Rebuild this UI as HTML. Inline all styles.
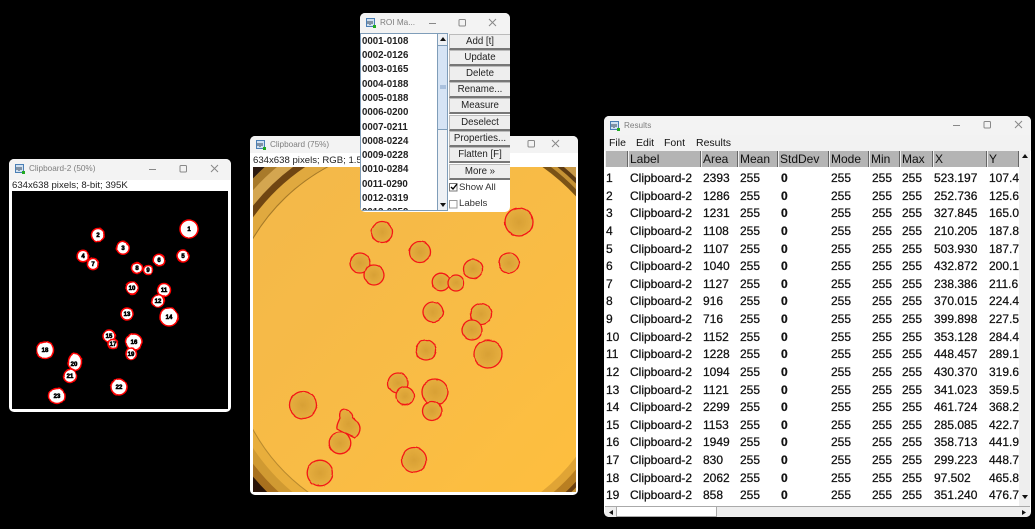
<!DOCTYPE html>
<html><head><meta charset="utf-8"><style>
html,body{margin:0;padding:0;background:#000;width:1035px;height:529px;overflow:hidden;font-family:"Liberation Sans",sans-serif}
#root{position:relative;width:1035px;height:529px;overflow:hidden;background:#000}
.w{position:absolute;background:#fff;border-radius:5px;overflow:hidden}
.tb{position:absolute;left:0;right:0;top:0;background:#f3f3f3}
.t{position:absolute;font-size:8.2px;color:#7d7d7d;white-space:nowrap;line-height:10px}
.a{position:absolute;white-space:nowrap}
.ic{position:absolute}
.b{position:absolute;width:60px;height:13px;background:#eee;border:1px solid #bbb;border-bottom:2px solid #777;border-right:1px solid #888;font-size:9.7px;line-height:14px;text-align:center;color:#222}
.l{position:absolute;left:1px;font-size:9.7px;font-weight:bold;color:#222;line-height:12px}
table{border-collapse:collapse;table-layout:fixed;position:absolute;left:1px;top:54px;width:414px;font-size:12px;color:#111;-webkit-text-stroke:.25px #111}
td{padding:0 0 0 1px;height:17.62px;line-height:17.62px;white-space:nowrap;overflow:hidden}
td:nth-child(5){font-weight:bold}
.h{position:absolute;top:35px;height:16px;background:#b4b4b4;border-left:1px solid #eee;border-right:1px solid #666;box-sizing:border-box;font-size:12px;line-height:17px;padding-left:1px;color:#111;overflow:hidden}
</style></head><body><div id="root">

<div class="w" style="left:9px;top:159px;width:222px;height:253px">
<div class="tb" style="height:21px"></div>
<svg class="ic" style="left:6px;top:5px" width="10" height="10"><rect x=".5" y=".5" width="8" height="8" fill="#cfe0f2" stroke="#4a7fb5"/><path d="M2 3v3M4 3v4M6 3v3" stroke="#345"/><rect x="7" y="7" width="3" height="3" fill="#2a2"/></svg>
<div class="t" style="left:20px;top:5px">Clipboard-2 (50%)</div>
<svg class="ic" style="left:140px;top:3px" width="75" height="14" fill="none" stroke="#888"><path d="M0 7.500h7"/><rect x="31" y="3.500" width="6.500" height="6.500" rx="1"/><path d="M62 3l7 7M69 3l-7 7"/></svg>
<div class="a" style="left:3px;top:21px;font-size:9.6px;line-height:11px;color:#222">634x638 pixels; 8-bit; 395K</div>
<svg class="ic" style="left:3px;top:32px" width="216" height="218" viewBox="12 191 216 218">
<rect x="12" y="191" width="216" height="218" fill="#000"/>
<g fill="#fff" stroke="#f00" stroke-width="1.500" filter="url(#r)">
<circle cx="189" cy="229" r="9"/><circle cx="98" cy="235" r="6.500"/><circle cx="123" cy="248" r="6.200"/><circle cx="83" cy="256" r="5.800"/><circle cx="183" cy="256" r="6"/><circle cx="159" cy="260" r="5.800"/><circle cx="93" cy="264" r="5.600"/><circle cx="137" cy="268" r="5.500"/><circle cx="148" cy="270" r="4.500"/><circle cx="132" cy="288" r="6"/><circle cx="164" cy="290" r="6.500"/><circle cx="158" cy="301" r="6"/><circle cx="127" cy="314" r="6"/><circle cx="169" cy="317" r="9"/><circle cx="109" cy="336" r="6"/><circle cx="113" cy="344" r="5"/><circle cx="134" cy="342" r="8"/><circle cx="131" cy="354" r="5.500"/><circle cx="45" cy="350" r="8.500"/><ellipse cx="75" cy="362" rx="6.500" ry="8.500"/><circle cx="70" cy="376" r="6.500"/><circle cx="119" cy="387" r="8"/><circle cx="57" cy="396" r="8"/>
</g>
<g font-size="6" font-weight="bold" text-anchor="middle" fill="#000" stroke="#000" stroke-width=".6">
<text x="189" y="231">1</text><text x="98" y="237">2</text><text x="123" y="250">3</text><text x="83" y="258">4</text><text x="183" y="258">5</text><text x="159" y="262">6</text><text x="93" y="266">7</text><text x="137" y="270">8</text><text x="148" y="272">9</text><text x="132" y="290">10</text><text x="164" y="292">11</text><text x="158" y="303">12</text><text x="127" y="316">13</text><text x="169" y="319">14</text><text x="109" y="338">15</text><text x="134" y="344">16</text><text x="113" y="346">17</text><text x="45" y="352">18</text><text x="131" y="356">19</text><text x="74" y="366">20</text><text x="70" y="378">21</text><text x="119" y="389">22</text><text x="57" y="398">23</text>
</g></svg>
</div>

<div class="w" style="left:250px;top:136px;width:328px;height:359px">
<div class="tb" style="height:17px"></div>
<svg class="ic" style="left:6px;top:4px" width="10" height="10"><rect x=".5" y=".5" width="8" height="8" fill="#cfe0f2" stroke="#4a7fb5"/><path d="M2 3v3M4 3v4M6 3v3" stroke="#345"/><rect x="7" y="7" width="3" height="3" fill="#2a2"/></svg>
<div class="t" style="left:20px;top:4px">Clipboard (75%)</div>
<svg class="ic" style="left:270px;top:1px" width="50" height="14" fill="none" stroke="#888"><rect x="8" y="3.500" width="6.500" height="6.500" rx="1"/><path d="M32 3l7 7M39 3l-7 7"/></svg>
<div class="a" style="left:3px;top:19px;font-size:9.6px;line-height:11px;color:#222">634x638 pixels; RGB; 1.5</div>
<svg class="ic" style="left:3px;top:31px" width="323" height="325" viewBox="253 167 323 325">
<defs>
<linearGradient id="g" x1="0" y1="0" x2="1" y2="1"><stop offset="0" stop-color="#f3b84a"/><stop offset=".6" stop-color="#f9bc45"/><stop offset="1" stop-color="#febf3e"/></linearGradient>
<radialGradient id="c"><stop offset="0" stop-color="#d8a035"/><stop offset="1" stop-color="#e6ae3e"/></radialGradient>
<filter id="r" x="-5%" y="-5%" width="110%" height="110%"><feTurbulence type="fractalNoise" baseFrequency=".13" numOctaves="1" seed="4"/><feDisplacementMap in="SourceGraphic" scale="1.800" xChannelSelector="R" yChannelSelector="G"/></filter>
</defs>
<rect x="253" y="167" width="323" height="325" fill="url(#g)"/>
<path fill="#a67a28" d="M253 239.300A194 194 0 0 1 328.400 167L253 167Z"/>
<path fill="#e0a93f" d="M253 237.300A195 195 0 0 1 326.300 167L253 167Z"/>
<path fill="#6f4512" d="M253 217.400A206 206 0 0 1 305.100 167L253 167Z"/>
<path fill="#d4a650" d="M253 205.800A213 213 0 0 1 293 167L253 167Z"/>
<path fill="#a87a2a" d="M253 190.200A223 223 0 0 1 276.900 167L253 167Z"/>
<path fill="#2c1a10" d="M253 178.400A231 231 0 0 1 264.700 167L253 167Z"/>
<path fill="#b98a2e" d="M253 428.600A190 190 0 0 0 308.700 492L253 492Z"/>
<path fill="#e8ae3c" d="M253 430.700A191 191 0 0 0 307 492L253 492Z"/>
<path fill="#d09a32" d="M253 448A200 200 0 0 0 292.400 492L253 492Z"/>
<path fill="#a8701e" d="M253 463.700A209 209 0 0 0 278.700 492L253 492Z"/>
<path fill="#2a1408" d="M253 476.600A217 217 0 0 0 267.100 492L253 492Z"/>
<path fill="#7a5216" d="M542.500 167A212 212 0 0 1 576 196.400L576 167Z"/>
<path fill="#c59234" d="M551 167A217 217 0 0 1 576 189.200L576 167Z"/>
<path fill="#5f3c12" d="M557.500 167A221 221 0 0 1 576 183.500L576 167Z"/>
<path fill="#c99a48" d="M563.900 167A225 225 0 0 1 576 177.900L576 167Z"/>
<path fill="#e0a435" d="M576 456.700A196 196 0 0 1 541.200 492L576 492Z"/>
<path fill="#b97f22" d="M576 469.500A204 204 0 0 1 553.800 492L576 492Z"/>
<path fill="#6b4010" d="M576 481.600A212 212 0 0 1 565.700 492L576 492Z"/>
<path fill="#c89232" d="M576 487.400A216 216 0 0 1 571.500 492L576 492Z"/>
<g filter="url(#r)" fill="url(#c)" stroke="#f41414" stroke-width="1.300">
<circle cx="519" cy="222" r="14"/><circle cx="382" cy="232" r="10.500"/><circle cx="420" cy="252" r="10.500"/><circle cx="360" cy="263" r="10"/><circle cx="374" cy="275" r="10"/><circle cx="509" cy="263" r="10"/><circle cx="473" cy="269" r="9.500"/><circle cx="441" cy="282" r="8.800"/><circle cx="456" cy="283" r="8"/><circle cx="433" cy="312" r="10"/><circle cx="481" cy="314" r="10.500"/><circle cx="472" cy="330" r="10"/><circle cx="488" cy="354" r="14"/><circle cx="426" cy="350" r="10"/><circle cx="398" cy="383" r="10"/><circle cx="405" cy="396" r="9"/><circle cx="435" cy="392" r="13"/><circle cx="432" cy="411" r="9.500"/><circle cx="303" cy="405" r="13.500"/><path d="M345 409.500c4 0 7 3 8 8 3 3 7 6 7 11 0 4-2 7-5 9.500-6-3-13-6-18-9-1-4 2-8 3-11-1-4 0-8.500 5-8.500z"/><circle cx="340" cy="443" r="10.800"/><circle cx="320" cy="473" r="12.800"/><circle cx="414" cy="460" r="12.500"/>
</g>
</svg>
</div>

<div class="w" style="left:360px;top:13px;width:150px;height:199px">
<div class="tb" style="height:21px"></div>
<svg class="ic" style="left:6px;top:5px" width="10" height="10"><rect x=".5" y=".5" width="8" height="8" fill="#cfe0f2" stroke="#4a7fb5"/><path d="M2 3v3M4 3v4M6 3v3" stroke="#345"/><rect x="7" y="7" width="3" height="3" fill="#2a2"/></svg>
<div class="t" style="left:20px;top:5px">ROI Ma...</div>
<svg class="ic" style="left:69px;top:3px" width="75" height="14" fill="none" stroke="#888"><path d="M0 7.500h7"/><rect x="30" y="3.500" width="6.500" height="6.500" rx="1"/><path d="M60 3l7 7M67 3l-7 7"/></svg>
<div class="a" style="left:0;top:20px;width:88px;height:178px;border:1px solid #7f9db9;box-sizing:border-box;overflow:hidden;background:#fff">
<div class="l" style="top:2px">0001-0108</div><div class="l" style="top:16px">0002-0126</div><div class="l" style="top:30px">0003-0165</div><div class="l" style="top:45px">0004-0188</div><div class="l" style="top:59px">0005-0188</div><div class="l" style="top:73px">0006-0200</div><div class="l" style="top:88px">0007-0211</div><div class="l" style="top:102px">0008-0224</div><div class="l" style="top:116px">0009-0228</div><div class="l" style="top:130px">0010-0284</div><div class="l" style="top:145px">0011-0290</div><div class="l" style="top:159px">0012-0319</div><div class="l" style="top:173px">0013-0359</div>
<div class="a" style="left:76px;top:0;width:10px;height:176px;background:#eef1f5;border-left:1px solid #7f9db9">
<div class="a" style="left:0;top:11px;width:10px;height:83px;background:#d6e4f5;border-top:1px solid #7f9db9;border-bottom:1px solid #7f9db9"><div class="a" style="left:2px;top:39px;width:6px;height:4px;background:#a9c0dd"></div></div>
<svg class="a" style="left:0;top:2px" width="10" height="6"><path d="M2 5h6L5 1z" fill="#111"/></svg>
<svg class="a" style="left:0;top:168px" width="10" height="6"><path d="M2 1h6L5 5z" fill="#111"/></svg>
</div></div>
<div class="b" style="left:89px;top:21px">Add [t]</div>
<div class="b" style="left:89px;top:37px">Update</div>
<div class="b" style="left:89px;top:53px">Delete</div>
<div class="b" style="left:89px;top:69px">Rename...</div>
<div class="b" style="left:89px;top:85px">Measure</div>
<div class="b" style="left:89px;top:102px">Deselect</div>
<div class="b" style="left:89px;top:118px">Properties...</div>
<div class="b" style="left:89px;top:134px">Flatten [F]</div>
<div class="b" style="left:89px;top:151px">More »</div>
<svg class="ic" style="left:89px;top:170px" width="10" height="10"><rect x=".5" y=".5" width="7.500" height="7.500" fill="#fff" stroke="#777"/><path d="M2 4l2 2 4-5" fill="none" stroke="#000" stroke-width="1.400"/></svg>
<div class="a" style="left:99px;top:169px;font-size:9.600px;line-height:12px;color:#333">Show All</div>
<svg class="ic" style="left:89px;top:187px" width="10" height="10"><rect x=".5" y=".5" width="7.500" height="7.500" fill="#fff" stroke="#999"/></svg>
<div class="a" style="left:99px;top:185px;font-size:9.600px;line-height:12px;color:#333">Labels</div>
</div>

<div class="w" style="left:604px;top:116px;width:427px;height:401px;background:#fff">
<div class="tb" style="height:19px"></div>
<svg class="ic" style="left:6px;top:5px" width="10" height="10"><rect x=".5" y=".5" width="8" height="8" fill="#cfe0f2" stroke="#4a7fb5"/><path d="M2 3v3M4 3v4M6 3v3" stroke="#345"/><rect x="7" y="7" width="3" height="3" fill="#2a2"/></svg>
<div class="t" style="left:20px;top:5px">Results</div>
<svg class="ic" style="left:349px;top:2px" width="70" height="14" fill="none" stroke="#888"><path d="M0 7.500h7"/><rect x="31" y="3.500" width="6.500" height="6.500" rx="1"/><path d="M62 3l7 7M69 3l-7 7"/></svg>
<div class="a" style="left:0;right:0;top:19px;height:16px;background:#f2f2f2;font-size:10.500px;line-height:16px;color:#111"><span class="a" style="left:5px">File</span><span class="a" style="left:32px">Edit</span><span class="a" style="left:60px">Font</span><span class="a" style="left:92px">Results</span></div>
<div class="h" style="left:1px;width:23px"></div>
<div class="h" style="left:24px;width:73px">Label</div>
<div class="h" style="left:97px;width:37px">Area</div>
<div class="h" style="left:134px;width:40px">Mean</div>
<div class="h" style="left:174px;width:51px">StdDev</div>
<div class="h" style="left:225px;width:40px">Mode</div>
<div class="h" style="left:265px;width:31px">Min</div>
<div class="h" style="left:296px;width:33px">Max</div>
<div class="h" style="left:329px;width:54px">X</div>
<div class="h" style="left:383px;width:32px">Y</div>
<table><colgroup><col style="width:24px"><col style="width:73px"><col style="width:37px"><col style="width:41px"><col style="width:50px"><col style="width:41px"><col style="width:30px"><col style="width:32px"><col style="width:55px"><col style="width:31px"></colgroup>
<tr><td>1</td><td>Clipboard-2</td><td>2393</td><td>255</td><td>0</td><td>255</td><td>255</td><td>255</td><td>523.197</td><td>107.4</td></tr>
<tr><td>2</td><td>Clipboard-2</td><td>1286</td><td>255</td><td>0</td><td>255</td><td>255</td><td>255</td><td>252.736</td><td>125.6</td></tr>
<tr><td>3</td><td>Clipboard-2</td><td>1231</td><td>255</td><td>0</td><td>255</td><td>255</td><td>255</td><td>327.845</td><td>165.0</td></tr>
<tr><td>4</td><td>Clipboard-2</td><td>1108</td><td>255</td><td>0</td><td>255</td><td>255</td><td>255</td><td>210.205</td><td>187.8</td></tr>
<tr><td>5</td><td>Clipboard-2</td><td>1107</td><td>255</td><td>0</td><td>255</td><td>255</td><td>255</td><td>503.930</td><td>187.7</td></tr>
<tr><td>6</td><td>Clipboard-2</td><td>1040</td><td>255</td><td>0</td><td>255</td><td>255</td><td>255</td><td>432.872</td><td>200.1</td></tr>
<tr><td>7</td><td>Clipboard-2</td><td>1127</td><td>255</td><td>0</td><td>255</td><td>255</td><td>255</td><td>238.386</td><td>211.6</td></tr>
<tr><td>8</td><td>Clipboard-2</td><td>916</td><td>255</td><td>0</td><td>255</td><td>255</td><td>255</td><td>370.015</td><td>224.4</td></tr>
<tr><td>9</td><td>Clipboard-2</td><td>716</td><td>255</td><td>0</td><td>255</td><td>255</td><td>255</td><td>399.898</td><td>227.5</td></tr>
<tr><td>10</td><td>Clipboard-2</td><td>1152</td><td>255</td><td>0</td><td>255</td><td>255</td><td>255</td><td>353.128</td><td>284.4</td></tr>
<tr><td>11</td><td>Clipboard-2</td><td>1228</td><td>255</td><td>0</td><td>255</td><td>255</td><td>255</td><td>448.457</td><td>289.1</td></tr>
<tr><td>12</td><td>Clipboard-2</td><td>1094</td><td>255</td><td>0</td><td>255</td><td>255</td><td>255</td><td>430.370</td><td>319.6</td></tr>
<tr><td>13</td><td>Clipboard-2</td><td>1121</td><td>255</td><td>0</td><td>255</td><td>255</td><td>255</td><td>341.023</td><td>359.5</td></tr>
<tr><td>14</td><td>Clipboard-2</td><td>2299</td><td>255</td><td>0</td><td>255</td><td>255</td><td>255</td><td>461.724</td><td>368.2</td></tr>
<tr><td>15</td><td>Clipboard-2</td><td>1153</td><td>255</td><td>0</td><td>255</td><td>255</td><td>255</td><td>285.085</td><td>422.7</td></tr>
<tr><td>16</td><td>Clipboard-2</td><td>1949</td><td>255</td><td>0</td><td>255</td><td>255</td><td>255</td><td>358.713</td><td>441.9</td></tr>
<tr><td>17</td><td>Clipboard-2</td><td>830</td><td>255</td><td>0</td><td>255</td><td>255</td><td>255</td><td>299.223</td><td>448.7</td></tr>
<tr><td>18</td><td>Clipboard-2</td><td>2062</td><td>255</td><td>0</td><td>255</td><td>255</td><td>255</td><td>97.502</td><td>465.8</td></tr>
<tr><td>19</td><td>Clipboard-2</td><td>858</td><td>255</td><td>0</td><td>255</td><td>255</td><td>255</td><td>351.240</td><td>476.7</td></tr>
</table>
<div class="a" style="left:415px;top:35px;width:11px;height:355px;background:#eee"></div>
<svg class="a" style="left:416px;top:37px" width="10" height="6"><path d="M2 5h6L5 1z" fill="#111"/></svg>
<svg class="a" style="left:416px;top:378px" width="10" height="6"><path d="M2 1h6L5 5z" fill="#111"/></svg>
<div class="a" style="left:1px;top:390px;width:425px;height:11px;background:#eee;border-top:1px solid #aaa;box-sizing:border-box"></div>
<div class="a" style="left:12px;top:390px;width:101px;height:11px;background:#fff;border:1px solid #aaa;box-sizing:border-box"></div>
<svg class="a" style="left:4px;top:393px" width="6" height="7"><path d="M5 1v5L1 3.500z" fill="#111"/></svg>
<svg class="a" style="left:417px;top:393px" width="6" height="7"><path d="M1 1v5l4-2.500z" fill="#111"/></svg>
</div>
</div></body></html>
